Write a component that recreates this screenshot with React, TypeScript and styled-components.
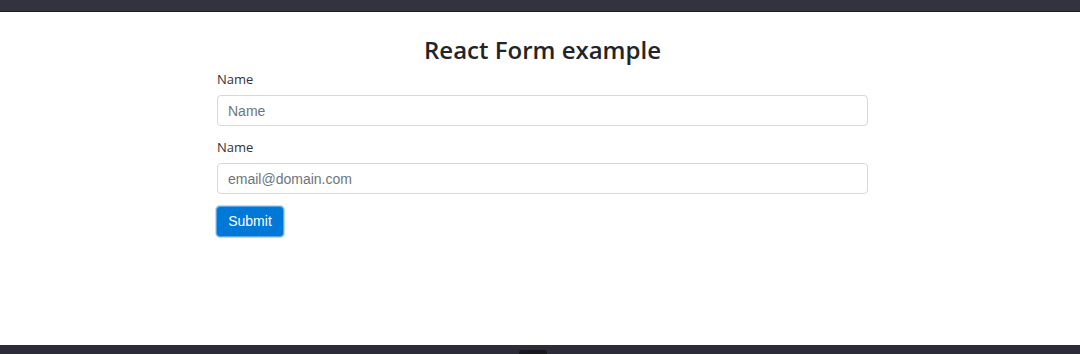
import styled, { createGlobalStyle } from "styled-components";
import { useState } from "react";

const GlobalStyle = createGlobalStyle`
  html, body {
    margin: 0;
    padding: 0;
    background: #ffffff;
  }
  * {
    box-sizing: border-box;
  }
`;

const Page = styled.div`
  display: flex;
  flex-direction: column;
  height: 354px;
  overflow: hidden;
`;

const TopBar = styled.div`
  height: 12px;
  flex: none;
  background: #32333f;
  border-bottom: 1px solid #1c1d24;
`;

const Main = styled.main`
  flex: 1;
  background: #ffffff;
  padding-top: 22px;
`;

const BottomBar = styled.div`
  height: 9px;
  flex: none;
  background: #2b2c38;
  display: flex;
  justify-content: center;
  align-items: flex-end;
`;

const BarTab = styled.div`
  width: 28px;
  height: 4px;
  margin-left: -14px;
  background: #18181e;
  border-radius: 3px 3px 0 0;
`;

const ContentWrapper = styled.div`
  width: 651px;
  margin-left: calc(50% - 323px);
`;

const Title = styled.h1`
  margin: 0;
  text-align: center;
  font-family: "Open Sans", "Noto Sans", sans-serif;
  font-size: 24px;
  font-weight: 600;
  line-height: 31px;
  color: #212529;
`;

const FormGroup = styled.div`
  margin-top: 12px;

  &:first-child {
    margin-top: 5px;
  }
`;

const Label = styled.label`
  display: block;
  font-family: "Open Sans", "Noto Sans", sans-serif;
  font-size: 13px;
  line-height: 19px;
  color: #333333;
  margin-bottom: 6px;
`;

const Input = styled.input`
  display: block;
  width: 100%;
  height: 31px;
  padding: 0 10px;
  border: 1px solid #d5d8dc;
  border-radius: 4px;
  font-family: "Liberation Sans", Arial, sans-serif;
  font-size: 14px;
  color: #495057;
  background: #ffffff;

  &:focus {
    outline: none;
    border-color: #80bdff;
  }

  &::placeholder {
    color: #6c757d;
  }
`;

const SubmitButton = styled.button`
  display: block;
  margin-top: 12px;
  margin-left: -1px;
  width: 68px;
  height: 31px;
  padding: 0 0 1px;
  background: #0078d7;
  color: #ffffff;
  border: 1px solid #5ea6e3;
  border-radius: 4px;
  box-shadow: 0 0 0 1px rgba(0, 120, 215, 0.25);
  font-family: "Liberation Sans", Arial, sans-serif;
  font-size: 14px;
  cursor: pointer;
`;

export default function App() {
  const [form, setForm] = useState({ name: "", email: "" });

  const handleChange = (e: React.ChangeEvent<HTMLInputElement>) => {
    const { name, value } = e.target;
    setForm((prev) => ({ ...prev, [name]: value }));
  };

  const handleSubmit = (e: React.FormEvent) => {
    e.preventDefault();
  };

  return (
    <Page>
      <GlobalStyle />
      <TopBar />
      <Main>
        <ContentWrapper>
          <Title>React Form example</Title>
          <form onSubmit={handleSubmit}>
            <FormGroup>
              <Label htmlFor="name">Name</Label>
              <Input
                id="name"
                name="name"
                type="text"
                placeholder="Name"
                value={form.name}
                onChange={handleChange}
              />
            </FormGroup>
            <FormGroup>
              <Label htmlFor="email">Name</Label>
              <Input
                id="email"
                name="email"
                type="email"
                placeholder="email@domain.com"
                value={form.email}
                onChange={handleChange}
              />
            </FormGroup>
            <SubmitButton type="submit">Submit</SubmitButton>
          </form>
        </ContentWrapper>
      </Main>
      <BottomBar>
        <BarTab />
      </BottomBar>
    </Page>
  );
}
